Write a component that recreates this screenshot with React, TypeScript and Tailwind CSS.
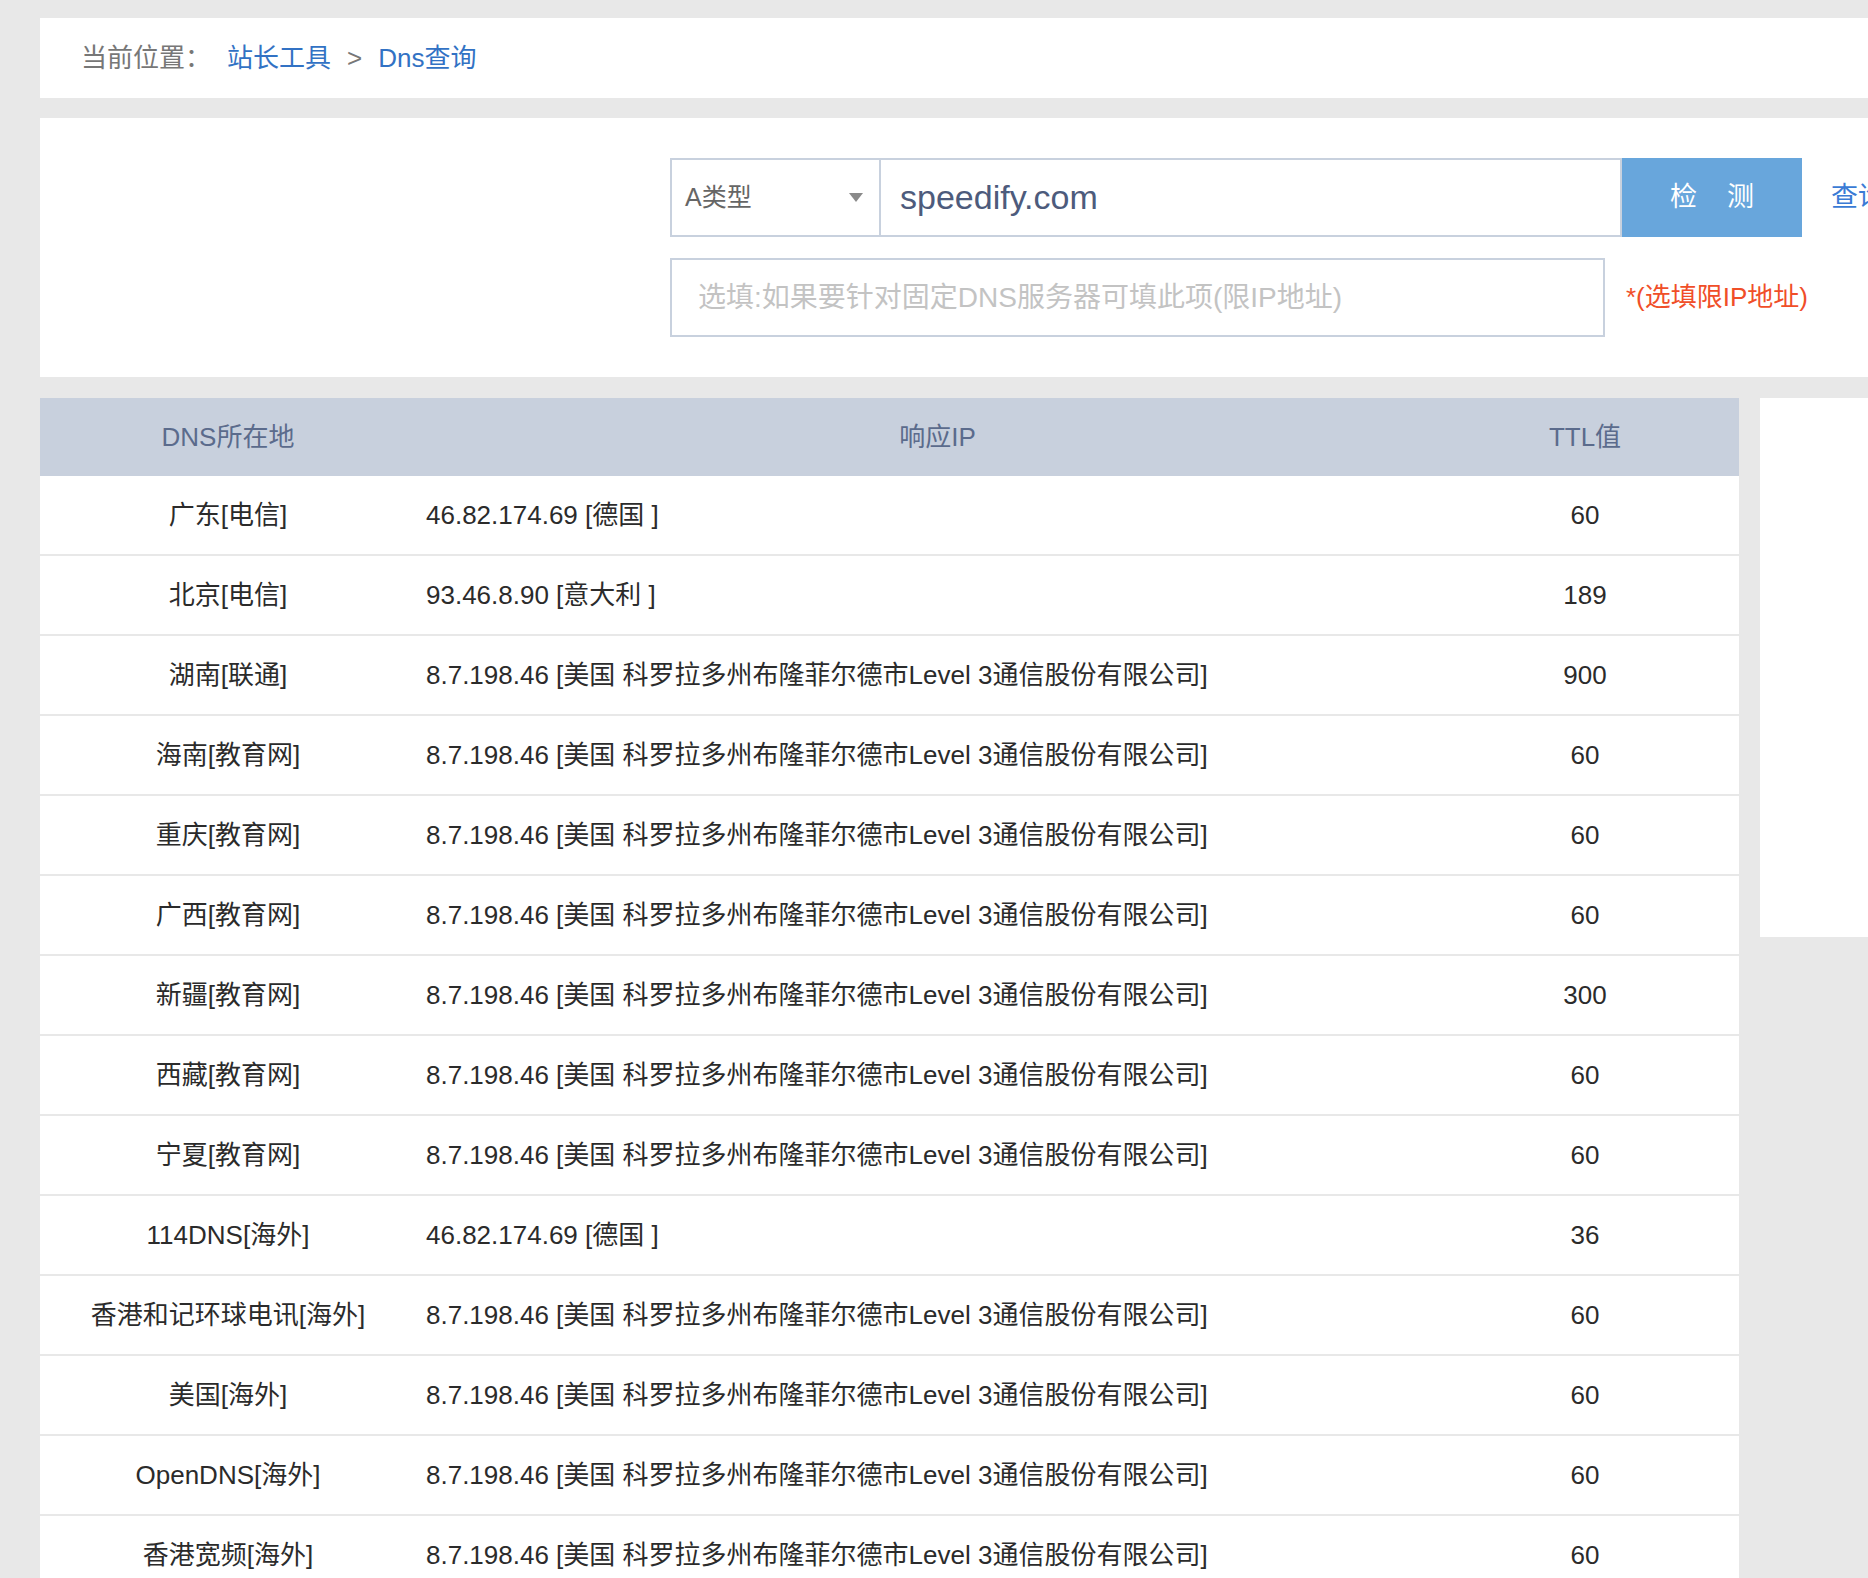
const font = { fontFamily: '"Liberation Sans", "Noto Sans CJK SC", sans-serif' }

interface DnsRow {
  location: string
  ip: string
  ttl: string
}

const L3 = "8.7.198.46 [美国 科罗拉多州布隆菲尔德市Level 3通信股份有限公司]"

const rows: DnsRow[] = [
  { location: "广东[电信]", ip: "46.82.174.69 [德国 ]", ttl: "60" },
  { location: "北京[电信]", ip: "93.46.8.90 [意大利 ]", ttl: "189" },
  { location: "湖南[联通]", ip: L3, ttl: "900" },
  { location: "海南[教育网]", ip: L3, ttl: "60" },
  { location: "重庆[教育网]", ip: L3, ttl: "60" },
  { location: "广西[教育网]", ip: L3, ttl: "60" },
  { location: "新疆[教育网]", ip: L3, ttl: "300" },
  { location: "西藏[教育网]", ip: L3, ttl: "60" },
  { location: "宁夏[教育网]", ip: L3, ttl: "60" },
  { location: "114DNS[海外]", ip: "46.82.174.69 [德国 ]", ttl: "36" },
  { location: "香港和记环球电讯[海外]", ip: L3, ttl: "60" },
  { location: "美国[海外]", ip: L3, ttl: "60" },
  { location: "OpenDNS[海外]", ip: L3, ttl: "60" },
  { location: "香港宽频[海外]", ip: L3, ttl: "60" },
]

function Breadcrumb() {
  return (
    <div className="h-[80px] bg-white flex items-center pl-[41px] text-[26px] whitespace-nowrap">
      <span className="text-[#777]">当前位置：</span>
      <a className="ml-[16px] text-[#3272c4]">站长工具</a>
      <span className="mx-[16px] text-[#777]">&gt;</span>
      <a className="text-[#3272c4]">Dns查询</a>
    </div>
  )
}

function QueryForm() {
  return (
    <div className="h-[259px] bg-white pt-[40px] pl-[630px] overflow-hidden whitespace-nowrap">
      <div className="flex items-center h-[79px]">
        <div className="w-[211px] shrink-0 h-full border-2 border-[#c8d1de] flex items-center justify-between pl-[13px] pr-[16px] text-[25px] text-[#666]">
          <span>A类型</span>
          <svg width="14" height="9" viewBox="0 0 14 9">
            <path d="M0 0 H14 L7 9 Z" fill="#8a8a8a" />
          </svg>
        </div>
        <div className="w-[741px] shrink-0 h-full border-2 border-l-0 border-[#c8d1de] flex items-center pl-[19px] text-[34px] text-[#4d5b7c]">
          speedify.com
        </div>
        <button className="w-[180px] shrink-0 h-full bg-[#68a6dc] text-white text-[27px] flex items-center justify-center">
          检<span className="w-[30px]" />测
        </button>
        <a className="ml-[29px] shrink-0 text-[27px] text-[#3a7bd5]">查询</a>
      </div>
      <div className="flex items-center mt-[21px] h-[79px]">
        <div className="w-[935px] shrink-0 h-full border-2 border-[#c8d1de] flex items-center pl-[26px] text-[28px] text-[#c3c3c3]">
          选填:如果要针对固定DNS服务器可填此项(限IP地址)
        </div>
        <span className="ml-[21px] shrink-0 text-[26px] text-[#f04e28]">*(选填限IP地址)</span>
      </div>
    </div>
  )
}

function ResultTable() {
  return (
    <div className="w-[1699px] shrink-0 bg-white">
      <div className="h-[78px] bg-[#c8d0dd] grid grid-cols-[376px_1fr_308px] items-center text-[26px] text-[#5b6b8c]">
        <div className="text-center">DNS所在地</div>
        <div className="text-center pl-[28px]">响应IP</div>
        <div className="text-center">TTL值</div>
      </div>
      {rows.map((r, i) => (
        <div
          key={i}
          className="h-[80px] border-b-2 border-[#e8e8e8] grid grid-cols-[376px_1fr_308px] items-center text-[26px] text-[#2b2b2b] whitespace-nowrap"
        >
          <div className="text-center">{r.location}</div>
          <div className="pl-[10px]">{r.ip}</div>
          <div className="text-center">{r.ttl}</div>
        </div>
      ))}
    </div>
  )
}

export default function App() {
  return (
    <div className="h-[1578px] overflow-hidden bg-[#e8e8e8] pt-[18px] pl-[40px]" style={font}>
      <Breadcrumb />
      <div className="mt-[20px]">
        <QueryForm />
      </div>
      <div className="mt-[21px] flex gap-[21px] items-start">
        <ResultTable />
        <div className="flex-1 h-[539px] bg-white" />
      </div>
    </div>
  )
}
